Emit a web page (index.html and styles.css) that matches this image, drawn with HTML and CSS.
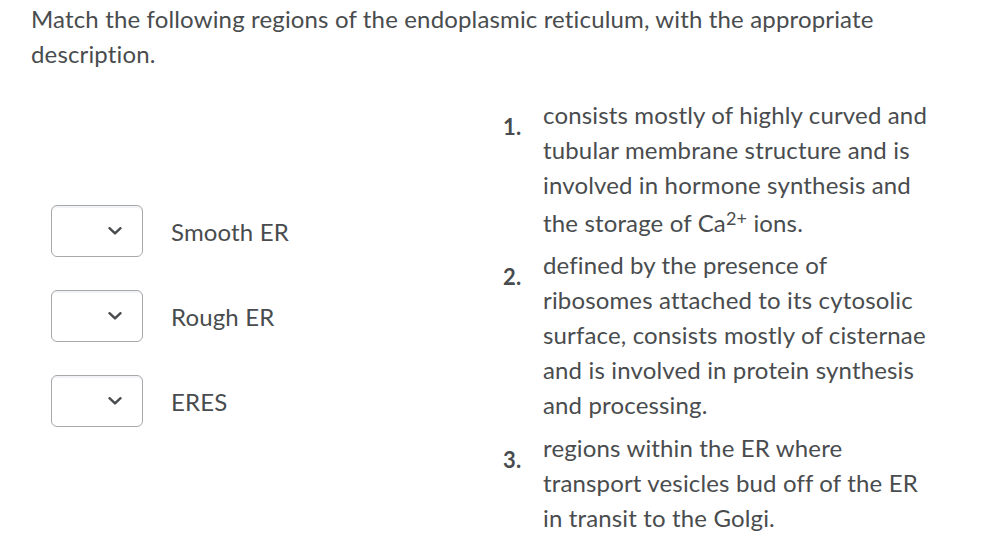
FILE: index.html
```html
<!DOCTYPE html>
<html lang="en">
<head>
    <meta charset="UTF-8">
    <title>Matching Question</title>
    <link rel="stylesheet" href="styles.css">
</head>
<body>
    <div class="question">
        <p class="prompt">Match the following regions of the endoplasmic reticulum, with the appropriate description.</p>

        <div class="match">
            <div class="choices">
                <div class="choice">
                    <div class="select">
                        <svg width="14" height="8" viewBox="0 0 14 8"><polyline points="1.5,1.2 7,6.4 12.5,1.2" fill="none" stroke="#494c4e" stroke-width="2.4" stroke-linecap="round" stroke-linejoin="round"/></svg>
                    </div>
                    <span class="label">Smooth ER</span>
                </div>
                <div class="choice">
                    <div class="select">
                        <svg width="14" height="8" viewBox="0 0 14 8"><polyline points="1.5,1.2 7,6.4 12.5,1.2" fill="none" stroke="#494c4e" stroke-width="2.4" stroke-linecap="round" stroke-linejoin="round"/></svg>
                    </div>
                    <span class="label">Rough ER</span>
                </div>
                <div class="choice">
                    <div class="select">
                        <svg width="14" height="8" viewBox="0 0 14 8"><polyline points="1.5,1.2 7,6.4 12.5,1.2" fill="none" stroke="#494c4e" stroke-width="2.4" stroke-linecap="round" stroke-linejoin="round"/></svg>
                    </div>
                    <span class="label">ERES</span>
                </div>
            </div>

            <ol class="answers">
                <li class="answer">
                    <span class="num">1.</span>
                    <span class="text">consists mostly of highly curved and tubular membrane structure and is involved in hormone synthesis and the storage of Ca<sup>2+</sup> ions.</span>
                </li>
                <li class="answer">
                    <span class="num">2.</span>
                    <span class="text">defined by the presence of ribosomes attached to its cytosolic surface, consists mostly of cisternae and is involved in protein synthesis and processing.</span>
                </li>
                <li class="answer">
                    <span class="num">3.</span>
                    <span class="text">regions within the ER where transport vesicles bud off of the ER in transit to the Golgi.</span>
                </li>
            </ol>
        </div>
    </div>
</body>
</html>
```

FILE: styles.css
```css
body {
    margin: 0;
    padding: 0;
    background: #fff;
    font-family: 'Lato', 'Open Sans', sans-serif;
    font-size: 24px;
    line-height: 35px;
    letter-spacing: 0.15px;
    color: #494c4e;
    font-variant-ligatures: none;
}

.question {
    padding: 1px 0 0 31px;
}

.prompt {
    margin: 0;
    max-width: 880px;
}

.match {
    display: flex;
    align-items: center;
    margin-top: 26px;
}

.choices {
    width: 452px;
    padding-left: 20px;
    display: flex;
    flex-direction: column;
    gap: 33px;
}

.choice {
    display: flex;
    align-items: center;
    gap: 28px;
}

/* empty dropdown, only the chevron shows */
.select {
    width: 70px;
    height: 50px;
    padding-right: 20px;
    border: 1px solid #a6a8ab;
    border-radius: 6px;
    box-shadow: inset 0 2px 0 0 rgba(185, 194, 208, 0.2);
    display: flex;
    align-items: center;
    justify-content: flex-end;
}

.answers {
    list-style: none;
    margin: 0;
    padding: 0;
}

.answer {
    display: flex;
    margin-bottom: 8px;
}

.answer:first-child {
    margin-bottom: 7px;
}

.answer:last-child {
    margin-bottom: 0;
}

.num {
    width: 40px;
    flex-shrink: 0;
    padding-top: 12px;
    font-weight: 700;
    font-size: 22px;
}

.text {
    width: 395px;
}

sup {
    font-size: 18px;
    line-height: 32px;
    vertical-align: 7px;
}
```
